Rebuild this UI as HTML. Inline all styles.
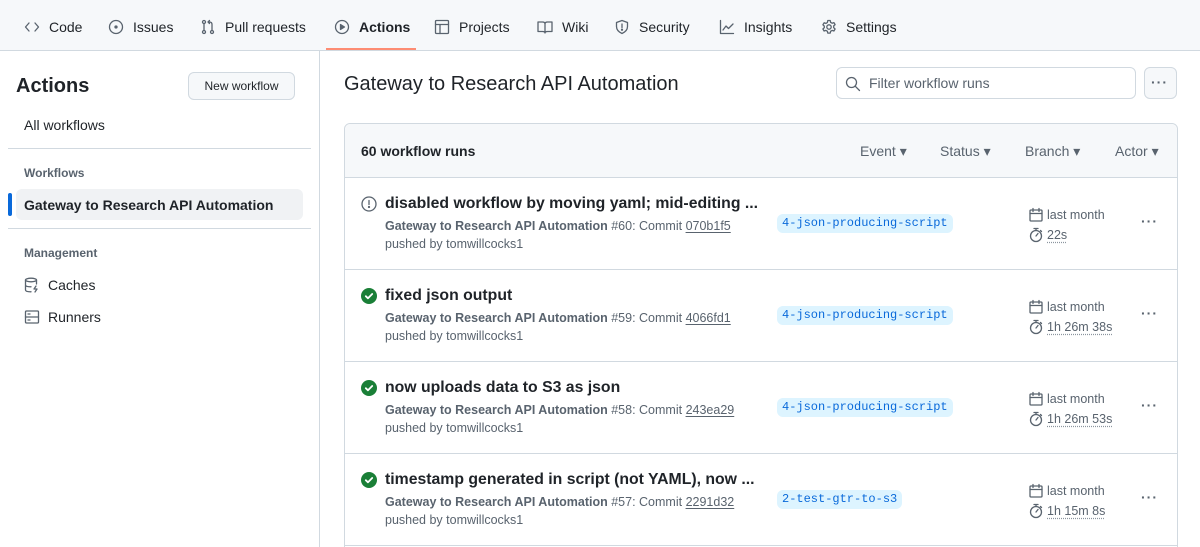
<!DOCTYPE html>
<html><head><meta charset="utf-8"><style>
*{box-sizing:border-box;margin:0;padding:0}
html,body{width:1200px;height:547px;overflow:hidden}
body{background:#fff;font-family:"Liberation Sans",sans-serif;color:#1f2328;position:relative}
.a{position:absolute;white-space:nowrap}
svg{fill:none;stroke:#59636e;stroke-width:1.3;stroke-linecap:round;stroke-linejoin:round}
.nav{position:absolute;left:0;top:0;width:1200px;height:51px;background:#f6f8fa;border-bottom:1px solid #d1d9e0}
.ni{position:absolute;top:19px;font-size:14px;color:#1f2328}
.ni svg{position:absolute;left:-25px;top:0}
.badge{position:absolute;background:#ddf4ff;color:#0969da;font-family:"Liberation Mono",monospace;font-size:12px;padding:2px 5px;border-radius:6px;height:19px;line-height:15px}
.t{font-size:15.8px;font-weight:bold}
.s{font-size:12.5px;color:#59636e}
.s b{color:#59636e}
.u{text-decoration:underline;text-decoration-color:#59636e;text-underline-offset:2px}
.dots{position:absolute;font-size:14px;color:#59636e;letter-spacing:1px;font-weight:bold}
</style></head><body>
<div class="nav">
<div class="ni" style="left:49px"><svg width="16" height="16" viewBox="0 0 16 16"><path d="M5 4L1.5 8 5 12M11 4l3.5 4L11 12"/></svg>Code</div>
<div class="ni" style="left:133px"><svg width="16" height="16" viewBox="0 0 16 16"><circle cx="8" cy="8" r="6.5"/><circle cx="8" cy="8" r="1" fill="#59636e"/></svg>Issues</div>
<div class="ni" style="left:225px"><svg width="16" height="16" viewBox="0 0 16 16"><circle cx="4" cy="3" r="1.5"/><circle cx="4" cy="13" r="1.5"/><circle cx="12" cy="13" r="1.5"/><path d="M4 4.5v7M12 11.5V5.5Q12 3 9.5 3H8M9.5 1.5L8 3l1.5 1.5"/></svg>Pull requests</div>
<div class="ni" style="left:359px;font-weight:bold"><svg width="16" height="16" viewBox="0 0 16 16"><circle cx="8" cy="8" r="6.5"/><path d="M6.5 5.5v5l4-2.5z" fill="#59636e"/></svg>Actions</div>
<div class="a" style="left:326px;top:48px;width:90px;height:2px;background:#fd8c73"></div>
<div class="ni" style="left:459px"><svg width="16" height="16" viewBox="0 0 16 16"><rect x="1.5" y="1.5" width="13" height="13" rx="1"/><path d="M1.5 5.5h13M6 5.5v9"/></svg>Projects</div>
<div class="ni" style="left:562px"><svg width="16" height="16" viewBox="0 0 16 16"><path d="M1 3h4.5Q8 3 8 5v9Q8 12.5 5.5 12.5H1zM15 3h-4.5Q8 3 8 5M15 3v9.5h-4.5Q8 12.5 8 14"/></svg>Wiki</div>
<div class="ni" style="left:639px"><svg width="16" height="16" viewBox="0 0 16 16"><path d="M8 1.5l5.5 2v4Q13.5 12 8 14.5 2.5 12 2.5 7.5v-4z"/><path d="M8 5v3.5"/><circle cx="8" cy="10.7" r=".5" fill="#59636e"/></svg>Security</div>
<div class="ni" style="left:744px"><svg width="16" height="16" viewBox="0 0 16 16"><path d="M1.5 1.5v13h13M4 11l3-4 2.5 2.5L14 5"/></svg>Insights</div>
<div class="ni" style="left:846px"><svg width="16" height="16" viewBox="0 0 16 16"><circle cx="8" cy="8" r="2.2"/><path d="M6.8 1.5h2.4l.4 1.8 1.5.9 1.8-.6 1.2 2-1.4 1.3v1.8l1.4 1.3-1.2 2-1.8-.6-1.5.9-.4 1.8H6.8l-.4-1.8-1.5-.9-1.8.6-1.2-2 1.4-1.300V7.1L1.9 5.8l1.2-2 1.8.6 1.5-.9z"/></svg>Settings</div>
</div>
<div class="a" style="left:319px;top:51px;width:1px;height:496px;background:#d1d9e0"></div>
<div class="a" style="left:16px;top:75px;font-size:20px;font-weight:bold">Actions</div>
<div class="a" style="left:188px;top:72px;width:107px;height:28px;border:1px solid #d1d9e0;border-radius:6px;background:#f6f8fa;font-size:12px;text-align:center;line-height:26px">New workflow</div>
<div class="a" style="left:24px;top:117px;font-size:14px">All workflows</div>
<div class="a" style="left:8px;top:148px;width:303px;height:1px;background:#d1d9e0"></div>
<div class="a" style="left:24px;top:166px;font-size:12px;font-weight:bold;color:#59636e">Workflows</div>
<div class="a" style="left:16px;top:189px;width:287px;height:31px;background:#f0f2f4;border-radius:6px"></div>
<div class="a" style="left:8px;top:193px;width:4px;height:23px;background:#0969da;border-radius:2px"></div>
<div class="a" style="left:24px;top:197px;font-size:14px;font-weight:bold">Gateway to Research API Automation</div>
<div class="a" style="left:8px;top:228px;width:303px;height:1px;background:#d1d9e0"></div>
<div class="a" style="left:24px;top:246px;font-size:12px;font-weight:bold;color:#59636e">Management</div>
<svg class="a" style="left:24px;top:277px" width="16" height="16" viewBox="0 0 16 16"><ellipse cx="7" cy="3" rx="5.5" ry="1.8"/><path d="M1.5 3v10q0 1.8 5.5 1.8M12.5 3v4M1.5 8q0 1.8 5.5 1.8M12 9l-2 3h3l-2 3"/></svg>
<div class="a" style="left:48px;top:277px;font-size:14px">Caches</div>
<svg class="a" style="left:24px;top:309px" width="16" height="16" viewBox="0 0 16 16"><rect x="1.5" y="2" width="13" height="12" rx="1"/><path d="M1.5 8h13M4 5h2M4 11h2"/></svg>
<div class="a" style="left:48px;top:309px;font-size:14px">Runners</div>

<div class="a" style="left:344px;top:73px;font-size:20px">Gateway to Research API Automation</div>
<div class="a" style="left:836px;top:67px;width:300px;height:32px;border:1px solid #d1d9e0;border-radius:6px"></div>
<svg class="a" style="left:845px;top:76px" width="16" height="16" viewBox="0 0 16 16"><circle cx="6.5" cy="6.5" r="5"/><path d="M10.2 10.2L14.5 14.5"/></svg>
<div class="a" style="left:869px;top:75px;font-size:14px;color:#59636e">Filter workflow runs</div>
<div class="a" style="left:1144px;top:67px;width:33px;height:32px;border:1px solid #d1d9e0;border-radius:6px;background:#f6f8fa"></div>
<div class="dots" style="left:1151px;top:74px">···</div>

<div class="a" style="left:344px;top:123px;width:834px;height:440px;border:1px solid #d1d9e0;border-radius:6px"></div>
<div class="a" style="left:345px;top:124px;width:832px;height:54px;background:#f6f8fa;border-bottom:1px solid #d1d9e0;border-radius:6px 6px 0 0"></div>
<div class="a" style="left:361px;top:143px;font-size:14px;font-weight:bold">60 workflow runs</div>
<div class="a" style="left:860px;top:143px;font-size:14px;color:#59636e">Event ▾</div>
<div class="a" style="left:940px;top:143px;font-size:14px;color:#59636e">Status ▾</div>
<div class="a" style="left:1025px;top:143px;font-size:14px;color:#59636e">Branch ▾</div>
<div class="a" style="left:1115px;top:143px;font-size:14px;color:#59636e">Actor ▾</div>

<div class="a" style="left:345px;top:269px;width:832px;height:1px;background:#d1d9e0"></div>
<div class="a" style="left:345px;top:361px;width:832px;height:1px;background:#d1d9e0"></div>
<div class="a" style="left:345px;top:453px;width:832px;height:1px;background:#d1d9e0"></div>
<div class="a" style="left:345px;top:545px;width:832px;height:1px;background:#d1d9e0"></div>

<svg class="a" style="left:361px;top:196px" width="16" height="16" viewBox="0 0 16 16"><circle cx="8" cy="8" r="7"/><path d="M8 4.5v4"/><circle cx="8" cy="11" r=".5" fill="#59636e"/></svg>
<div class="a t" style="left:385px;top:195px">disabled workflow by moving yaml; mid-editing ...</div>
<div class="a s" style="left:385px;top:219px"><b>Gateway to Research API Automation</b> #60: Commit <span class="u">070b1f5</span></div>
<div class="a s" style="left:385px;top:237px">pushed by tomwillcocks1</div>
<div class="badge" style="left:777px;top:214px">4-json-producing-script</div>

<svg class="a" style="left:361px;top:288px" width="16" height="16" viewBox="0 0 16 16"><circle cx="8" cy="8" r="8" fill="#1a7f37" stroke="none"/><path d="M4.8 8.2l2.2 2.1 4.2-4.3" stroke="#fff" stroke-width="1.8"/></svg>
<div class="a t" style="left:385px;top:287px">fixed json output</div>
<div class="a s" style="left:385px;top:311px"><b>Gateway to Research API Automation</b> #59: Commit <span class="u">4066fd1</span></div>
<div class="a s" style="left:385px;top:329px">pushed by tomwillcocks1</div>
<div class="badge" style="left:777px;top:306px">4-json-producing-script</div>

<svg class="a" style="left:361px;top:380px" width="16" height="16" viewBox="0 0 16 16"><circle cx="8" cy="8" r="8" fill="#1a7f37" stroke="none"/><path d="M4.8 8.2l2.2 2.1 4.2-4.3" stroke="#fff" stroke-width="1.8"/></svg>
<div class="a t" style="left:385px;top:379px">now uploads data to S3 as json</div>
<div class="a s" style="left:385px;top:403px"><b>Gateway to Research API Automation</b> #58: Commit <span class="u">243ea29</span></div>
<div class="a s" style="left:385px;top:421px">pushed by tomwillcocks1</div>
<div class="badge" style="left:777px;top:398px">4-json-producing-script</div>

<svg class="a" style="left:361px;top:472px" width="16" height="16" viewBox="0 0 16 16"><circle cx="8" cy="8" r="8" fill="#1a7f37" stroke="none"/><path d="M4.8 8.2l2.2 2.1 4.2-4.3" stroke="#fff" stroke-width="1.8"/></svg>
<div class="a t" style="left:385px;top:471px">timestamp generated in script (not YAML), now ...</div>
<div class="a s" style="left:385px;top:495px"><b>Gateway to Research API Automation</b> #57: Commit <span class="u">2291d32</span></div>
<div class="a s" style="left:385px;top:513px">pushed by tomwillcocks1</div>
<div class="badge" style="left:777px;top:490px">2-test-gtr-to-s3</div>

<div id="m"></div>
<script>
var d=[[0,"22s"],[92,"1h 26m 38s"],[184,"1h 26m 53s"],[276,"1h 15m 8s"]],h="";
d.forEach(function(r){var y=r[0];
h+='<svg class="a" style="left:1028px;top:'+(207+y)+'px" width="16" height="16" viewBox="0 0 16 16"><rect x="2" y="3" width="12" height="11" rx="1"/><path d="M2 6.5h12M5 1.5v3M11 1.5v3"/></svg>';
h+='<div class="a s" style="left:1047px;top:'+(208+y)+'px">last month</div>';
h+='<svg class="a" style="left:1028px;top:'+(227+y)+'px" width="16" height="16" viewBox="0 0 16 16"><circle cx="8" cy="9" r="5.5"/><path d="M6 1.5h4M8 1.5v2M8 9l2-2.5M12.5 3.5l1 1"/></svg>';
h+='<div class="a s" style="left:1047px;top:'+(228+y)+'px;text-decoration:underline dotted #8c959f;text-underline-offset:3px">'+r[1]+'</div>';
h+='<div class="dots" style="left:1141px;top:'+(213+y)+'px">···</div>';});
document.getElementById("m").innerHTML=h;
</script>
</body></html>
